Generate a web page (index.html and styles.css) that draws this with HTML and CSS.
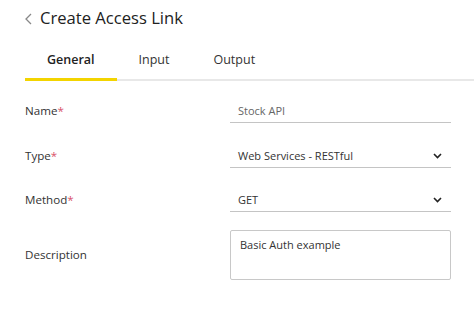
FILE: index.html
```html
<!DOCTYPE html>
<html>
<head>
<meta charset="utf-8">
<link rel="stylesheet" href="styles.css">
</head>
<body>
<div class="page">
  <div class="header">
    <svg class="back" width="7" height="12" viewBox="0 0 7 12"><polyline points="6,1 1,6 6,11" fill="none" stroke="#888" stroke-width="1.3"/></svg>
    <h1 class="title">Create Access Link</h1>
  </div>
  <div class="tabs">
    <div class="tab active">General</div>
    <div class="tab">Input</div>
    <div class="tab">Output</div>
  </div>
  <div class="form">
    <div class="label">Name<span class="req">*</span></div>
    <div class="field"><span class="value muted">Stock API</span></div>

    <div class="label">Type<span class="req">*</span></div>
    <div class="field"><span class="value">Web Services - RESTful</span>
      <svg class="caret" width="9" height="6" viewBox="0 0 9 6"><polyline points="1,1 4.5,4.5 8,1" fill="none" stroke="#222" stroke-width="1.6"/></svg>
    </div>

    <div class="label">Method<span class="req">*</span></div>
    <div class="field"><span class="value">GET</span>
      <svg class="caret" width="9" height="6" viewBox="0 0 9 6"><polyline points="1,1 4.5,4.5 8,1" fill="none" stroke="#222" stroke-width="1.6"/></svg>
    </div>

    <div class="label desc">Description</div>
    <div class="textarea">Basic Auth example</div>
  </div>
</div>
</body>
</html>
```

FILE: styles.css
```css
* { box-sizing: border-box; }
html, body { margin: 0; padding: 0; background: #fff; }
body { font-family: "Open Sans", "Noto Sans", sans-serif; color: #333; }
.page { width: 474px; height: 310px; overflow: hidden; }
.header { display: flex; align-items: center; height: 36px; padding-left: 25px; }
.back { margin-right: 8px; margin-top: 1px; }
.title { margin: 0; font-size: 16.6px; font-weight: 400; color: #222; line-height: 24px; }
.tabs { display: flex; margin-left: 25px; margin-top: 6px; border-bottom: 2px solid #e8e8e8; height: 39px; }
.tab { padding: 0 22px; font-size: 12.5px; line-height: 36px; color: #333; height: 39px; margin-bottom: -2px; border-bottom: 3px solid transparent; }
.tab.active { font-weight: 600; border-bottom-color: #f3d400; color: #222; }
.form { display: grid; grid-template-columns: 205px 221px; row-gap: 20.5px; align-items: center; padding: 18px 0 0 25px; }
.label { font-size: 11.6px; color: #333; margin-top: -1px; }
.label.desc { margin-top: -3px; }
.req { color: #d9536a; }
.field { height: 24px; border-bottom: 1px solid #c4c4c4; display: flex; align-items: center; justify-content: space-between; padding: 0 9px 0 8px; font-size: 11px; }
.value { color: #333; }
.value.muted { color: #666; }
.caret { margin-top: 1px; }
.textarea { height: 50px; margin-top: -3px; border: 1px solid #c8c8c8; border-radius: 2px; padding: 6px 9px; font-size: 11px; color: #333; line-height: 16px; }
```
